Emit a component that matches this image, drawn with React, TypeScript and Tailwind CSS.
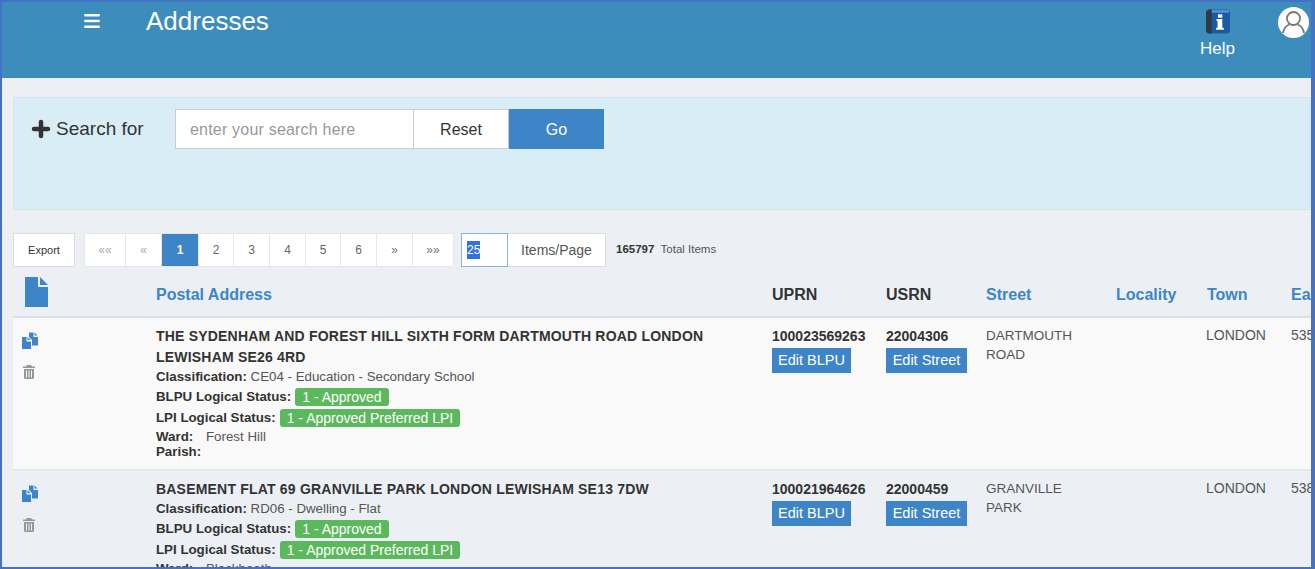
import { Menu, Plus } from "lucide-react";

const pages = ["««", "«", "1", "2", "3", "4", "5", "6", "»", "»»"];
const pageWidths = ["w-[42px]", "w-[36px]", "w-[37px]", "w-[35px]", "w-[36px]", "w-[36px]", "w-[35px]", "w-[36px]", "w-[36px]", "w-[41px]"];

const gridCols = "grid grid-cols-[143px_616px_114px_100px_130px_91px_84px_100px]";

type Address = {
  lines: string[];
  classification: string;
  ward: string;
  parish: boolean;
  uprn: string;
  usrn: string;
  street: string[];
  easting: string;
};

const rows: Address[] = [
  {
    lines: ["THE SYDENHAM AND FOREST HILL SIXTH FORM DARTMOUTH ROAD LONDON", "LEWISHAM SE26 4RD"],
    classification: "CE04 - Education - Secondary School",
    ward: "Forest Hill",
    parish: true,
    uprn: "100023569263",
    usrn: "22004306",
    street: ["DARTMOUTH", "ROAD"],
    easting: "535",
  },
  {
    lines: ["BASEMENT FLAT 69 GRANVILLE PARK LONDON LEWISHAM SE13 7DW"],
    classification: "RD06 - Dwelling - Flat",
    ward: "Blackheath",
    parish: false,
    uprn: "100021964626",
    usrn: "22000459",
    street: ["GRANVILLE", "PARK"],
    easting: "538",
  },
];

function CopyIcon() {
  return (
    <svg className="block" width="17" height="17" viewBox="0 0 17 17" fill="#3d85c6">
      <path d="M0 5h4.500v4.500h4.500V17H0z" />
      <path d="M5.500 5l3 3h-3z" />
      <path d="M7 0.500h4.500V5H16v8.500h-6V8L7 5z" />
      <path d="M12.500 0.500l3 3h-3z" />
    </svg>
  );
}

function TrashIcon() {
  return (
    <svg className="block" width="12" height="14" viewBox="0 0 12 14" fill="#979797">
      <path d="M4 0h4l1 1.500h3V3H0V1.500h3z" />
      <path d="M1 4h10v9l-1 1H2l-1-1zM3 5.500v7h1v-7zM5.500 5.500v7h1v-7zM8 5.500v7h1v-7z" fillRule="evenodd" />
    </svg>
  );
}

function HelpIcon() {
  return (
    <svg className="block" width="24" height="25" viewBox="0 0 25 25">
      <rect x="0" y="0" width="25" height="25" rx="4" fill="#1a5aa5" />
      <path d="M4 0h2v25H4a4 4 0 0 1-4-4V4a4 4 0 0 1 4-4z" fill="#2f3a46" />
      <rect x="6" y="0.500" width="18" height="3" fill="#4d8fd0" />
      <rect x="12.500" y="5" width="4.500" height="3.500" fill="#fff" />
      <path d="M11 10h6v9h1.500v2h-8v-2H12v-7h-1z" fill="#fff" />
    </svg>
  );
}

function UserIcon() {
  return (
    <svg className="block" width="31" height="31" viewBox="0 0 31 31">
      <circle cx="15.500" cy="15.500" r="15.500" fill="#fff" />
      <circle cx="15.500" cy="11.500" r="6.500" fill="none" stroke="#7d7470" strokeWidth="1.800" />
      <path d="M5 26c1-6 5-8 6.500-8.500M26 26c-1-6-5-8-6.500-8.500" fill="none" stroke="#7d7470" strokeWidth="1.800" />
    </svg>
  );
}

function Row({ row, shaded }: { row: Address; shaded: boolean }) {
  return (
    <div className={`${gridCols} border-b-2 border-[#e4e7eb] text-[13.300px] leading-[19px] text-[#555] ${shaded ? "bg-[#ecf0f5]" : "bg-[#f9f9f9]"}`}>
      <div className="flex flex-col gap-[16px] pl-[9px] pt-[14px]">
        <CopyIcon />
        <span className="pl-[1px]">
          <TrashIcon />
        </span>
      </div>
      <div className="pt-[8px] pb-[8px]">
        <div className="text-[14px] font-bold leading-[21px] tracking-[0.200px] text-[#333]">
          {row.lines.map((line) => (
            <div key={line}>{line}</div>
          ))}
        </div>
        <div className="-mt-[1px]">
          <b className="text-[#333]">Classification:</b> {row.classification}
        </div>
        <div className="mt-[1px] flex items-center">
          <b className="text-[#333]">BLPU Logical Status:</b>
          <span className="ml-[4px] rounded-[3px] bg-[#5cb85c] px-[7px] text-[14px] leading-[18px] text-white">1 - Approved</span>
        </div>
        <div className="mt-[2px] flex items-center">
          <b className="text-[#333]">LPI Logical Status:</b>
          <span className="ml-[4px] rounded-[3px] bg-[#5cb85c] px-[7px] text-[14px] leading-[18px] text-white">1 - Approved Preferred LPI</span>
        </div>
        <div className="mt-[1px] flex leading-[18px]">
          <b className="w-[50px] text-[#333]">Ward:</b>
          <span>{row.ward}</span>
        </div>
        {row.parish && (
          <div className="-mt-[3px] leading-[18px]">
            <b className="text-[#333]">Parish:</b>
          </div>
        )}
      </div>
      <div className="pt-[9px]">
        <div className="text-[14px] font-bold text-[#333]">{row.uprn}</div>
        <button className="mt-[2px] h-[25px] w-[79px] bg-[#3d85c6] text-[14.500px] text-white">Edit BLPU</button>
      </div>
      <div className="pt-[9px]">
        <div className="text-[14px] font-bold text-[#333]">{row.usrn}</div>
        <button className="mt-[2px] h-[25px] w-[81px] bg-[#3d85c6] text-[14.500px] text-white">Edit Street</button>
      </div>
      <div className="pt-[8px] text-[13.500px]">
        {row.street.map((s) => (
          <div key={s}>{s}</div>
        ))}
      </div>
      <div />
      <div className="-ml-[1px] pt-[8px] text-[14px]">LONDON</div>
      <div className="pt-[8px] text-[14px]">{row.easting}</div>
    </div>
  );
}

export default function App() {
  return (
    <div className="h-[569px] w-[1315px] overflow-hidden border-2 border-r-4 border-[#4472c4] bg-[#ecf0f5] font-['Liberation_Sans',Arial,sans-serif]">
      <header className="flex h-[76px] bg-[#3c8dbc] text-white">
        <div className="w-[80px]" />
        <Menu className="mt-[9px] h-[20px] w-[20px]" strokeWidth={3} />
        <h1 className="ml-[44px] mt-[3px] text-[26px] leading-[32px]">Addresses</h1>
        <div className="ml-auto flex">
          <div className="mr-[43px] flex flex-col items-center pt-[7px]">
            <HelpIcon />
            <span className="mt-[3px] text-[17px] leading-[24px]">Help</span>
          </div>
          <div className="mr-[2px] pt-[5px]">
            <UserIcon />
          </div>
        </div>
      </header>

      <main className="pl-[11px]">
        <section className="mt-[19px] h-[113px] rounded-[2px] border border-[#d3e4ee] bg-[#d9edf7] pl-[15px] pt-[11px]">
          <div className="flex items-center">
            <Plus className="h-[24px] w-[24px] text-[#333]" strokeWidth={4.500} />
            <span className="ml-[3px] w-[119px] pt-[1px] text-[19px] text-[#333]">Search for</span>
            <input
              placeholder="enter your search here"
              className="h-[40px] w-[239px] border border-[#ccc] bg-white px-[14px] pt-[2px] text-[16px] tracking-[0.200px] placeholder:text-[#999]"
            />
            <button className="h-[40px] w-[95px] border border-l-0 border-[#ccc] bg-white pt-[2px] text-[16px] text-[#333]">Reset</button>
            <button className="h-[40px] w-[95px] bg-[#3d85c6] pt-[2px] text-[16px] text-white">Go</button>
          </div>
        </section>

        <div className="mt-[23px] flex items-center">
          <button className="h-[34px] w-[62px] border border-[#ddd] bg-white text-[11px] text-[#333]">Export</button>
          <div className="ml-[9px] flex h-[34px]">
            {pages.map((p, i) => (
              <span
                key={i}
                className={`flex items-center justify-center border border-l-0 border-[#e7e7e7] text-[12px] first:border-l ${pageWidths[i]} ${
                  p === "1" ? "bg-[#3d85c6] font-bold text-white" : i < 2 ? "bg-white text-[#aaa]" : i > 7 ? "bg-white text-[#777]" : "bg-white text-[#666]"
                }`}
              >
                {p}
              </span>
            ))}
          </div>
          <div className="ml-[7px] flex h-[34px] w-[47px] items-center border border-[#8db4d8] bg-white pl-[5px] text-[12px]">
            <span className="bg-[#3373d9] text-white">25</span>
          </div>
          <span className="flex h-[34px] w-[98px] items-center justify-center border border-l-0 border-[#ddd] bg-white text-[14px] text-[#555]">Items/Page</span>
          <span className="ml-[10px] text-[11.500px] text-[#555]">
            <b className="text-[#333]">165797</b>&nbsp; Total Items
          </span>
        </div>

        <div className={`${gridCols} mt-[6px] h-[45px] items-center border-b-2 border-[#dcdfe3] text-[16px] font-bold text-[#3d85c6]`}>
          <div className="-mt-[6px] pl-[12px]">
            <svg className="block" width="23" height="30" viewBox="0 0 23 30" fill="#3d85c6">
              <path d="M0 0h13v10h10v20H0z" />
              <path d="M15 0l8 8h-8z" />
            </svg>
          </div>
          <div>Postal Address</div>
          <div className="text-[#333]">UPRN</div>
          <div className="text-[#333]">USRN</div>
          <div>Street</div>
          <div>Locality</div>
          <div>Town</div>
          <div>Easting</div>
        </div>

        {rows.map((row, i) => (
          <Row key={row.uprn} row={row} shaded={i === 1} />
        ))}
      </main>
    </div>
  );
}
